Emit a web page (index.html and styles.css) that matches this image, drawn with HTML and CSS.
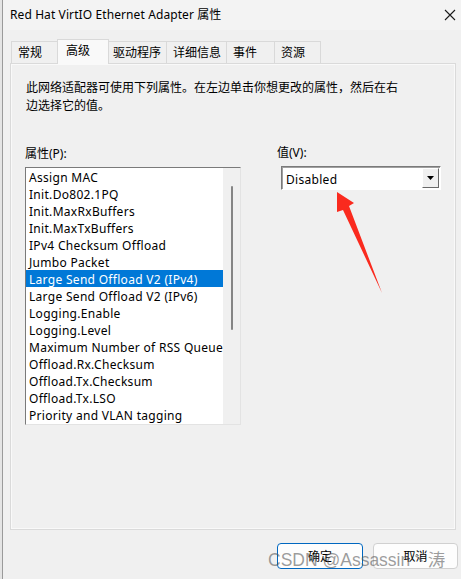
FILE: index.html
```html
<!DOCTYPE html>
<html lang="zh-CN">
<head>
<meta charset="utf-8">
<title>Red Hat VirtIO Ethernet Adapter 属性</title>
<link rel="stylesheet" href="styles.css">
</head>
<body>
<div class="window">
  <div class="titlebar">
    <span class="title">Red Hat VirtIO Ethernet Adapter 属性</span>
    <svg class="close" width="12" height="12" viewBox="0 0 12 12"><path d="M1 1L11 11M11 1L1 11" stroke="#1a1a1a" stroke-width="1.1" fill="none"/></svg>
  </div>
  <div class="tabs">
    <div class="tab w1">常规</div>
    <div class="tab w2 active">高级</div>
    <div class="tab w3">驱动程序</div>
    <div class="tab w4">详细信息</div>
    <div class="tab w5">事件</div>
    <div class="tab w6">资源</div>
  </div>
  <div class="panel">
    <p class="desc">此网络适配器可使用下列属性。在左边单击你想更改的属性，然后在右<br>边选择它的值。</p>
    <div class="cols">
      <div class="left">
        <div class="label">属性(P):</div>
        <div class="listbox">
          <ul class="items">
            <li>Assign MAC</li>
            <li>Init.Do802.1PQ</li>
            <li>Init.MaxRxBuffers</li>
            <li>Init.MaxTxBuffers</li>
            <li>IPv4 Checksum Offload</li>
            <li>Jumbo Packet</li>
            <li class="sel">Large Send Offload V2 (IPv4)</li>
            <li>Large Send Offload V2 (IPv6)</li>
            <li>Logging.Enable</li>
            <li>Logging.Level</li>
            <li>Maximum Number of RSS Queue</li>
            <li>Offload.Rx.Checksum</li>
            <li>Offload.Tx.Checksum</li>
            <li>Offload.Tx.LSO</li>
            <li>Priority and VLAN tagging</li>
          </ul>
          <div class="vscroll"><div class="thumb"></div></div>
        </div>
      </div>
      <div class="right">
        <div class="label">值(V):</div>
        <div class="combo">
          <span class="value">Disabled</span>
          <div class="drop"><svg width="7" height="4" viewBox="0 0 7 4"><path d="M0 0H7L3.5 4Z" fill="#000"/></svg></div>
        </div>
      </div>
    </div>
  </div>
  <div class="buttons">
    <button class="btn primary">确定</button>
    <button class="btn">取消</button>
  </div>
  <svg class="arrow" width="461" height="579" viewBox="0 0 461 579"><polygon points="337,192 354,203 349,206 382,293 343,210 337,212" fill="#fa2a1e"/></svg>
  <div class="watermark">CSDN @Assassin丶涛</div>
</div>
</body>
</html>
```
FILE: styles.css
```css
html, body {
  margin: 0;
  padding: 0;
  background: #e4e4e4;
}
body {
  width: 461px;
  height: 579px;
  overflow: hidden;
  font-family: "Noto Sans", "Noto Sans CJK SC", sans-serif;
  font-size: 12px;
  color: #000;
}
.window {
  position: relative;
  margin-left: 2px;
  border-left: 1px solid #9a9a9a;
  background: #f0f0f0;
  height: 579px;
}
.titlebar {
  height: 30px;
  display: flex;
  align-items: center;
  justify-content: space-between;
  padding: 0 5px 0 7px;
  background: #f3f3f3;
}
.title {
  font-size: 12px;
  line-height: 16px;
  letter-spacing: 0.1px;
  color: #000;
}
.close {
  display: block;
  margin-top: -1px;
}
.tabs {
  display: flex;
  align-items: flex-end;
  height: 24px;
  margin-top: 9px;
  margin-left: 8px;
}
.tab {
  box-sizing: border-box;
  height: 22px;
  border: 1px solid #d9d9d9;
  border-bottom: none;
  margin-left: -1px;
  background: #f0f0f0;
  line-height: 22px;
  padding-left: 6px;
}
.tab.w1 { width: 47px; margin-left: 0; }
.tab.w2 { width: 52px; }
.tab.w3 { width: 59px; padding-left: 4px; }
.tab.w4 { width: 61px; }
.tab.w5 { width: 49px; }
.tab.w6 { width: 47px; }
.tab.active {
  height: 25px;
  margin-bottom: -1px;
  background: #f9f9f9;
  line-height: 21px;
  padding-left: 8px;
  position: relative;
  z-index: 1;
}
.panel {
  box-sizing: border-box;
  width: 446px;
  height: 467px;
  margin-left: 7px;
  border: 1px solid #dadada;
  box-shadow: inset 1px 1px 0 #f9f9f9, inset -1px -1px 0 #f9f9f9;
  background: #f0f0f0;
  padding-top: 15px;
}
.desc {
  margin: 0 0 0 15px;
  line-height: 18px;
}
.cols {
  display: flex;
  margin-top: 29px;
  padding-left: 14px;
}
.left {
  width: 216px;
}
.right {
  margin-left: 36px;
}
.label {
  line-height: 19px;
  height: 18px;
}
.right .label {
  margin-top: -1px;
}
.listbox {
  box-sizing: border-box;
  margin-top: 5px;
  width: 216px;
  height: 258px;
  border: 1px solid;
  border-color: #7a7a7a #e3e3e3 #e3e3e3 #7a7a7a;
  background: #fff;
  display: flex;
}
.items {
  list-style: none;
  margin: 0;
  padding: 0;
  width: 197px;
  overflow: hidden;
}
.items li {
  height: 17px;
  line-height: 19px;
  padding-left: 3px;
  letter-spacing: 0.3px;
  white-space: nowrap;
  overflow: hidden;
}
.items li.sel {
  background: #0078d7;
  color: #fff;
}
.vscroll {
  width: 17px;
  background: #f0f0f0;
  display: flex;
  justify-content: center;
  padding-top: 18px;
}
.thumb {
  width: 2px;
  height: 144px;
  background: #858585;
  border-radius: 1px;
}
.combo {
  box-sizing: border-box;
  margin-top: 5px;
  margin-left: 4px;
  width: 160px;
  height: 24px;
  border: 1px solid;
  border-color: #7a7a7a #ffffff #ffffff #7a7a7a;
  box-shadow: inset 1px 1px 0 #a0a0a0;
  background: #fff;
  display: flex;
  align-items: center;
  justify-content: space-between;
  padding: 1px 1px 1px 4px;
}
.value {
  line-height: 18px;
  padding-top: 3px;
  letter-spacing: 0.3px;
}
.drop {
  box-sizing: border-box;
  width: 17px;
  height: 20px;
  background: #f0f0f0;
  border: 1px solid;
  border-color: #ffffff #696969 #696969 #ffffff;
  display: flex;
  align-items: center;
  justify-content: center;
}
.drop svg { display: block; }
.buttons {
  display: flex;
  justify-content: flex-end;
  gap: 10px;
  margin-top: 13px;
  padding-right: 3px;
}
.btn {
  box-sizing: border-box;
  height: 26px;
  font-family: "Noto Sans", "Noto Sans CJK SC", sans-serif;
  font-size: 12px;
  color: #000;
  background: #fdfdfd;
  border: 1px solid #d0d0d0;
  border-radius: 4px;
  padding: 0;
  width: 85px;
}
.btn.primary {
  width: 86px;
  border: 1px solid #0067c0;
}
.arrow {
  position: absolute;
  left: -3px;
  top: 0;
  pointer-events: none;
}
.watermark {
  position: absolute;
  left: 265px;
  top: 549px;
  font-family: "Liberation Sans", "Noto Sans CJK SC", sans-serif;
  font-size: 17.5px;
  line-height: 22px;
  color: rgba(90, 90, 90, 0.6);
  white-space: nowrap;
  pointer-events: none;
}
```
